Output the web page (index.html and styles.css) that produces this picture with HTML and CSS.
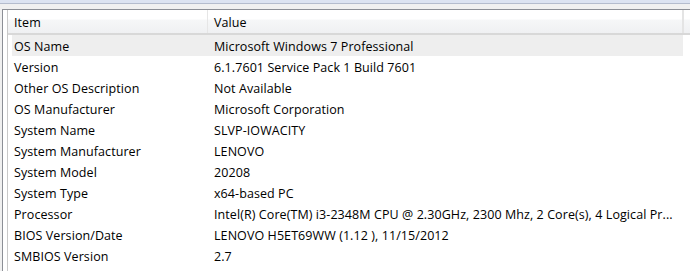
FILE: index.html
```html
<!DOCTYPE html>
<html lang="en">
<head>
  <meta charset="UTF-8" />
  <title>System Information</title>
  <link rel="stylesheet" href="styles.css">
</head>
<body>
  <div class="top-band"></div>
  <div class="frame">
    <div class="gutter"></div>
    <div class="list">
      <div class="list-header">
        <div class="col col-item">Item</div>
        <div class="col col-value">Value</div>
        <div class="col col-rest"></div>
      </div>
      <ul class="rows">
        <li class="row selected"><span class="cell name">OS Name</span><span class="cell value">Microsoft Windows 7 Professional</span></li>
        <li class="row"><span class="cell name">Version</span><span class="cell value">6.1.7601 Service Pack 1 Build 7601</span></li>
        <li class="row"><span class="cell name">Other OS Description</span><span class="cell value">Not Available</span></li>
        <li class="row"><span class="cell name">OS Manufacturer</span><span class="cell value">Microsoft Corporation</span></li>
        <li class="row"><span class="cell name">System Name</span><span class="cell value">SLVP-IOWACITY</span></li>
        <li class="row"><span class="cell name">System Manufacturer</span><span class="cell value">LENOVO</span></li>
        <li class="row"><span class="cell name">System Model</span><span class="cell value">20208</span></li>
        <li class="row"><span class="cell name">System Type</span><span class="cell value">x64-based PC</span></li>
        <li class="row"><span class="cell name">Processor</span><span class="cell value">Intel(R) Core(TM) i3-2348M CPU @ 2.30GHz, 2300 Mhz, 2 Core(s), 4 Logical Pr...</span></li>
        <li class="row"><span class="cell name">BIOS Version/Date</span><span class="cell value">LENOVO H5ET69WW (1.12 ), 11/15/2012</span></li>
        <li class="row"><span class="cell name">SMBIOS Version</span><span class="cell value">2.7</span></li>
      </ul>
    </div>
  </div>
</body>
</html>
```

FILE: styles.css
```css
:root {
  --panel: #f0f0f0;
  --frame-dark: #8c8f96;
  --frame-light: #c9c9c9;
  --selected: #eeeeee;
  --text: #000000;
}

* {
  margin: 0;
  padding: 0;
  box-sizing: border-box;
}

html, body {
  width: 690px;
  height: 271px;
  overflow: hidden;
  background: var(--panel);
  font-family: 'Open Sans', 'Noto Sans', sans-serif;
  font-size: 12.5px;
  letter-spacing: 0.08px;
  color: var(--text);
}

/* bar left over from the window chrome above */
.top-band {
  height: 4px;
  background: #dce3f1;
  border-bottom: 1px solid #b4bccd;
}

.frame {
  display: flex;
  margin-top: 5px;
  margin-left: 2px;
  height: 262px;
  border-top: 1px solid var(--frame-dark);
  border-left: 1px solid var(--frame-dark);
  background: #ffffff;
}

.gutter {
  width: 5px;
  border-right: 1px solid var(--frame-light);
}

.list {
  flex: 1;
  display: flex;
  flex-direction: column;
}

.list-header {
  display: flex;
  height: 25px;
  background: linear-gradient(#ffffff 0, #ffffff 9px, #f6f7f8 10px, #eff0f2 100%);
  border-bottom: 2px solid #d8d8d8;
}

.col {
  padding-top: 3px;
  line-height: 20px;
  padding-left: 6px;
}

.col-item {
  width: 200px;
  border-right: 1px solid #e6e6e6;
}

.col-value {
  width: 476px;
  border-right: 2px solid #e4e4e4;
}

.col-rest {
  flex: 1;
}

.rows {
  list-style: none;
}

.row {
  display: flex;
  height: 21px;
  padding-top: 3px;
  line-height: 18px;
  margin-left: 4px;
  width: 671px;
}

.row.selected {
  background: var(--selected);
}

.cell {
  white-space: nowrap;
  overflow: hidden;
}

.cell.name {
  width: 200px;
  padding-left: 2px;
}

.cell.value {
  flex: 1;
  padding-left: 2px;
}
```
